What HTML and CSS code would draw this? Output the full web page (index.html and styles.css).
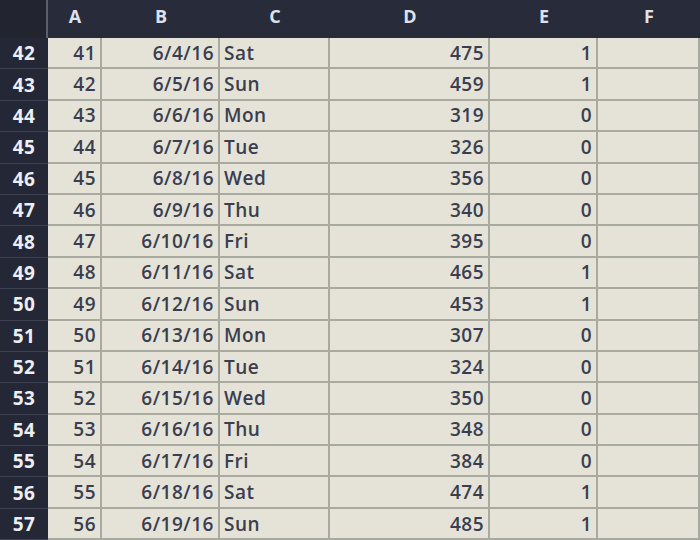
FILE: index.html
```html
<!DOCTYPE html>
<html>
<head>
<meta charset="utf-8">
<link rel="stylesheet" href="styles.css">
</head>
<body>
<div class="sheet">
  <div class="hd corner"></div>
  <div class="hd">A</div>
  <div class="hd">B</div>
  <div class="hd">C</div>
  <div class="hd">D</div>
  <div class="hd">E</div>
  <div class="hd">F</div>

  <div class="rh">42</div><div class="c r">41</div><div class="c r">6/4/16</div><div class="c l">Sat</div><div class="c r">475</div><div class="c r">1</div><div class="c"></div>
  <div class="rh">43</div><div class="c r">42</div><div class="c r">6/5/16</div><div class="c l">Sun</div><div class="c r">459</div><div class="c r">1</div><div class="c"></div>
  <div class="rh">44</div><div class="c r">43</div><div class="c r">6/6/16</div><div class="c l">Mon</div><div class="c r">319</div><div class="c r">0</div><div class="c"></div>
  <div class="rh">45</div><div class="c r">44</div><div class="c r">6/7/16</div><div class="c l">Tue</div><div class="c r">326</div><div class="c r">0</div><div class="c"></div>
  <div class="rh">46</div><div class="c r">45</div><div class="c r">6/8/16</div><div class="c l">Wed</div><div class="c r">356</div><div class="c r">0</div><div class="c"></div>
  <div class="rh">47</div><div class="c r">46</div><div class="c r">6/9/16</div><div class="c l">Thu</div><div class="c r">340</div><div class="c r">0</div><div class="c"></div>
  <div class="rh">48</div><div class="c r">47</div><div class="c r">6/10/16</div><div class="c l">Fri</div><div class="c r">395</div><div class="c r">0</div><div class="c"></div>
  <div class="rh">49</div><div class="c r">48</div><div class="c r">6/11/16</div><div class="c l">Sat</div><div class="c r">465</div><div class="c r">1</div><div class="c"></div>
  <div class="rh">50</div><div class="c r">49</div><div class="c r">6/12/16</div><div class="c l">Sun</div><div class="c r">453</div><div class="c r">1</div><div class="c"></div>
  <div class="rh">51</div><div class="c r">50</div><div class="c r">6/13/16</div><div class="c l">Mon</div><div class="c r">307</div><div class="c r">0</div><div class="c"></div>
  <div class="rh">52</div><div class="c r">51</div><div class="c r">6/14/16</div><div class="c l">Tue</div><div class="c r">324</div><div class="c r">0</div><div class="c"></div>
  <div class="rh">53</div><div class="c r">52</div><div class="c r">6/15/16</div><div class="c l">Wed</div><div class="c r">350</div><div class="c r">0</div><div class="c"></div>
  <div class="rh">54</div><div class="c r">53</div><div class="c r">6/16/16</div><div class="c l">Thu</div><div class="c r">348</div><div class="c r">0</div><div class="c"></div>
  <div class="rh">55</div><div class="c r">54</div><div class="c r">6/17/16</div><div class="c l">Fri</div><div class="c r">384</div><div class="c r">0</div><div class="c"></div>
  <div class="rh">56</div><div class="c r">55</div><div class="c r">6/18/16</div><div class="c l">Sat</div><div class="c r">474</div><div class="c r">1</div><div class="c"></div>
  <div class="rh">57</div><div class="c r">56</div><div class="c r">6/19/16</div><div class="c l">Sun</div><div class="c r">485</div><div class="c r">1</div><div class="c"></div>
</div>
</body>
</html>
```

FILE: styles.css
```css
html, body {
  margin: 0;
  padding: 0;
  background: #252938;
}
.sheet {
  width: 700px;
  height: 540px;
  overflow: hidden;
  display: grid;
  grid-template-columns: 48px 54px 118px 110px 160px 108px 1fr;
  grid-template-rows: 38px repeat(16, 31.4px);
  font-family: "Open Sans", "Liberation Sans", sans-serif;
  background: #252938;
}
.hd {
  background: #272b3a;
  color: #dfe2ea;
  font-weight: 700;
  font-size: 18px;
  display: flex;
  align-items: center;
  justify-content: center;
  padding-bottom: 6px;
  box-sizing: border-box;
}
.hd.corner {
  background: #22252f;
  border-right: 2px solid #5a5e6c;
}
.rh {
  background: #242836;
  color: #eceef4;
  font-weight: 700;
  font-size: 19px;
  letter-spacing: 0.5px;
  display: flex;
  align-items: center;
  justify-content: center;
  border-bottom: 1px solid #3c4050;
  box-sizing: border-box;
}
.c {
  background: #e5e3d8;
  color: #3a3e4f;
  font-size: 19px;
  font-weight: 600;
  letter-spacing: 0.5px;
  display: flex;
  align-items: center;
  border-right: 2px solid #a9aa9f;
  border-bottom: 2px solid #a9aa9f;
  box-sizing: border-box;
  padding: 0 4px;
}
.c.r { justify-content: flex-end; }
.c.l { justify-content: flex-start; }
```
